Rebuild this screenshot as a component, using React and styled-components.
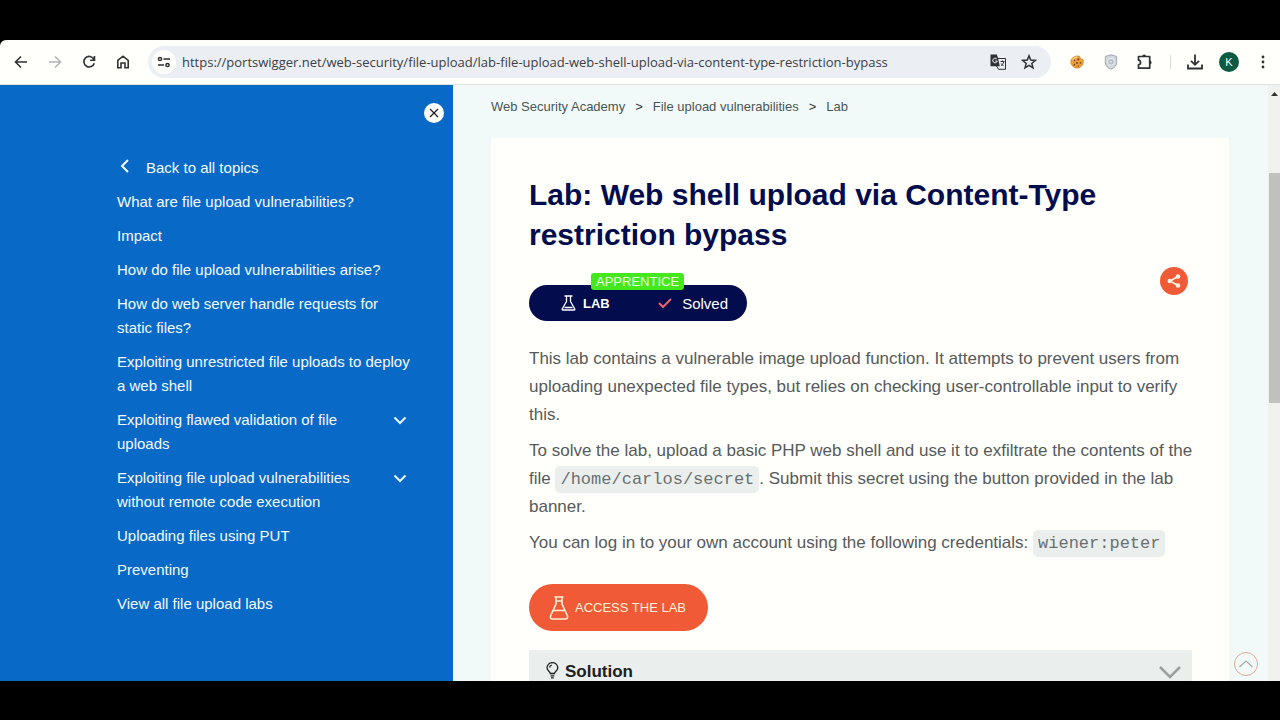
import React, { useState } from 'react';
import styled, { createGlobalStyle } from 'styled-components';

const GlobalStyle = createGlobalStyle`
  * {
    box-sizing: border-box;
  }

  body {
    margin: 0;
    background-color: #000;
    font-family: 'Liberation Sans', Arial, sans-serif;
  }

  h1, h2, p, ul, ol {
    margin: 0;
    padding: 0;
  }

  button {
    padding: 0;
    border: none;
    background: transparent;
    font-family: inherit;
    cursor: pointer;
  }

  svg {
    display: block;
    flex-shrink: 0;
  }
`;

const Screen = styled.div`
  display: flex;
  flex-direction: column;
  height: 100vh;
  padding: 40px 0 39px;
  background-color: #000;
`;

const Toolbar = styled.header`
  display: flex;
  align-items: center;
  flex-shrink: 0;
  height: 45px;
  padding: 0 7px 0 11px;
  background-color: #fffffc;
  border-bottom: 1px solid #dfe3e2;
  border-top-left-radius: 6px;
`;

const NavButtons = styled.nav`
  display: flex;
  gap: 14px;
  margin-right: 15px;
`;

const IconButton = styled.button`
  display: flex;
  align-items: center;
  justify-content: center;
  width: 20px;
  height: 24px;
  color: ${({ $muted }) => ($muted ? '#b4b5b4' : '#2f3133')};
`;

const AddressBar = styled.div`
  display: flex;
  align-items: center;
  flex: 1;
  height: 32px;
  padding: 0 12px 0 4px;
  border-radius: 16px;
  background-color: #ebeef3;
`;

const SiteInfo = styled.button`
  display: flex;
  align-items: center;
  justify-content: center;
  width: 24px;
  height: 24px;
  margin-right: 6px;
  border-radius: 50%;
  background-color: #fffffc;
  color: #2f3133;
`;

const UrlInput = styled.input`
  flex: 1;
  min-width: 0;
  padding: 0;
  border: none;
  outline: none;
  background: transparent;
  color: #3c4043;
  font-family: 'Open Sans', 'Noto Sans', sans-serif;
  font-size: 13px;
`;

const BarActions = styled.div`
  display: flex;
  align-items: center;
  gap: 11px;
`;

const Extensions = styled.div`
  display: flex;
  align-items: center;
  gap: 14px;
  margin-left: 16px;
`;

const Divider = styled.span`
  width: 1px;
  height: 14px;
  margin-left: 1px;
  background-color: #d8dade;
`;

const Avatar = styled.button`
  width: 20px;
  height: 20px;
  border-radius: 50%;
  background-color: #0b5a41;
  color: #fff;
  font-size: 11px;
`;

const Page = styled.div`
  position: relative;
  display: flex;
  flex: 1;
  min-height: 0;
  overflow: hidden;
  background-color: #f1faf8;
`;

const Sidebar = styled.aside`
  display: flex;
  flex-direction: column;
  flex-shrink: 0;
  width: 453px;
  padding: 18px 9px 0 117px;
  background-color: #0969c6;
`;

const CloseButton = styled.button`
  display: flex;
  align-items: center;
  justify-content: center;
  align-self: flex-end;
  width: 20px;
  height: 20px;
  margin-bottom: 33px;
  border-radius: 50%;
  background-color: #fff;
  color: #222;
`;

const TopicList = styled.ul`
  display: flex;
  flex-direction: column;
  gap: 10px;
  width: 298px;
  list-style: none;
`;

const Topic = styled.li`
  display: flex;
  justify-content: space-between;
`;

const TopicLink = styled.a`
  display: flex;
  gap: 12px;
  max-width: ${({ $narrow }) => ($narrow ? '240px' : 'none')};
  color: #f4fbff;
  font-size: 15px;
  line-height: 24px;
  text-decoration: none;

  &:hover {
    text-decoration: underline;
  }
`;

const ExpandButton = styled.button`
  display: flex;
  align-items: center;
  justify-content: center;
  width: 30px;
  height: 24px;
  color: #e6f7ff;
`;

const Main = styled.main`
  flex: 1;
  min-width: 0;
  padding: 12px 39px 0 38px;
`;

const Breadcrumbs = styled.nav`
  display: flex;
  gap: 10px;
  margin-bottom: 21px;
  color: #333;
  font-size: 13px;
  line-height: 20px;

  a {
    color: #4c5555;
    text-decoration: none;
  }
`;

const Card = styled.article`
  padding: 37px 37px 0 38px;
  background-color: #fffffc;
`;

const Title = styled.h1`
  color: #030c4c;
  font-size: 30px;
  line-height: 40px;
`;

const StatusRow = styled.div`
  display: flex;
  align-items: flex-start;
  justify-content: space-between;
  margin: 12px 4px 24px 0;
`;

const StatusPill = styled.div`
  position: relative;
  display: flex;
  align-items: center;
  width: 218px;
  height: 36px;
  margin-top: 18px;
  padding: 0 19px 0 32px;
  border-radius: 18px;
  background-color: #030c4c;
  color: #fff;
  font-size: 15px;
`;

const Level = styled.span`
  position: absolute;
  top: -12px;
  left: 62px;
  padding: 0 5px;
  border-radius: 3px;
  background-color: #45e81c;
  color: #e9ffe0;
  font-size: 13px;
  line-height: 17px;
`;

const LabLabel = styled.strong`
  margin: 0 auto 0 7px;
  font-size: 13px;
`;

const SolvedLabel = styled.span`
  margin-left: 10px;
`;

const ShareButton = styled.button`
  display: flex;
  align-items: center;
  justify-content: center;
  width: 28px;
  height: 28px;
  border-radius: 50%;
  background-color: #f05a36;
  color: #fff2e6;
`;

const Paragraph = styled.p`
  margin: 0 -4px 8px 0;
  color: #565a5a;
  font-size: 17px;
  line-height: 28px;
`;

const Code = styled.code`
  padding: 4px 5px;
  border-radius: 5px;
  background-color: #eaefee;
  color: #6a7070;
  font-family: 'Liberation Mono', monospace;
  font-size: 17px;
  line-height: 20px;
`;

const AccessButton = styled.a`
  display: inline-flex;
  align-items: center;
  gap: 6px;
  height: 47px;
  margin: 19px 0;
  padding: 0 22px 0 20px;
  border-radius: 24px;
  background-color: #f05a36;
  color: #fff2d8;
  font-size: 13px;
  text-decoration: none;
`;

const SolutionToggle = styled.button`
  display: flex;
  align-items: center;
  width: 100%;
  height: 44px;
  padding: 0 11px 0 17px;
  background-color: #eaefee;
  color: #9a9f9f;
`;

const SolutionTitle = styled.h2`
  margin: 0 auto 0 6px;
  color: #1c2020;
  font-size: 17px;
`;

const ToTopButton = styled.button`
  position: absolute;
  right: 22px;
  bottom: 5px;
  display: flex;
  align-items: center;
  justify-content: center;
  width: 24px;
  height: 24px;
  border: 1px solid #e2a894;
  border-radius: 50%;
  color: #a9aaa8;
`;

const ScrollTrack = styled.div`
  display: flex;
  flex-direction: column;
  align-items: center;
  flex-shrink: 0;
  width: 12px;
  padding-top: 7px;
  background-color: #f1f1f0;
  color: #333;
`;

const ScrollThumb = styled.div`
  width: 11px;
  height: 39%;
  margin: 77px 0 auto 1px;
  background-color: #c0c0be;
`;

const Icon = ({ size = 16, width = size, height = size, box = 16, stroke = 1.6, children }) => (
  <svg
    width={width}
    height={height}
    viewBox={typeof box === 'number' ? `0 0 ${box} ${box}` : box}
    fill="none"
    stroke="currentColor"
    strokeWidth={stroke}
    aria-hidden="true"
  >
    {children}
  </svg>
);

const topics = [
  { label: 'What are file upload vulnerabilities?' },
  { label: 'Impact' },
  { label: 'How do file upload vulnerabilities arise?' },
  { label: 'How do web server handle requests for static files?' },
  { label: 'Exploiting unrestricted file uploads to deploy a web shell' },
  { label: 'Exploiting flawed validation of file uploads', expandable: true },
  { label: 'Exploiting file upload vulnerabilities without remote code execution', expandable: true },
  { label: 'Uploading files using PUT' },
  { label: 'Preventing' },
  { label: 'View all file upload labs' },
];

const BrowserToolbar = () => {
  const [url, setUrl] = useState(
    'https://portswigger.net/web-security/file-upload/lab-file-upload-web-shell-upload-via-content-type-restriction-bypass'
  );

  return (
    <Toolbar>
      <NavButtons aria-label="Browser">
        <IconButton aria-label="Back">
          <Icon><path d="M14 8H3M8 2.500 2.500 8 8 13.500" /></Icon>
        </IconButton>
        <IconButton aria-label="Forward" $muted>
          <Icon><path d="M2 8h11M8 2.500 13.500 8 8 13.500" /></Icon>
        </IconButton>
        <IconButton aria-label="Reload">
          <Icon><path d="M12.800 5A5.300 5.300 0 1 0 13.300 9.200M13.500 2v4.300H9.200" /></Icon>
        </IconButton>
        <IconButton aria-label="Home">
          <Icon><path d="M2.800 6.300 8 2.200l5.200 4.100v7.500H10V9H6v4.800H2.800z" /></Icon>
        </IconButton>
      </NavButtons>
      <AddressBar>
        <SiteInfo aria-label="Site information">
          <Icon size={14} box={14} stroke={1.5}>
            <circle cx="3" cy="4" r="1.600" />
            <path d="M6.500 4H13M1 10h6" />
            <circle cx="10.500" cy="10" r="1.600" />
          </Icon>
        </SiteInfo>
        <UrlInput aria-label="Address" value={url} onChange={(e) => setUrl(e.target.value)} />
        <BarActions>
          <IconButton aria-label="Translate">
            <Icon box={16} stroke={1}>
              <path d="M6.500 4.500h9v10.800H8.500L6.500 12" />
              <path d="M.5.500h6.300l1 2.700 2 9H.5z" fill="currentColor" stroke="none" />
              <path d="M6.800 5A2.300 2.300 0 1 0 7.300 7H5.200" stroke="#ebeef3" />
              <path d="M10.500 7.500h4M12.500 6.500v1M13.700 7.800c-.5 2-1.500 3-2.700 4M11 9.500l2.500 2.500" />
            </Icon>
          </IconButton>
          <IconButton aria-label="Bookmark">
            <Icon stroke={1.500}>
              <path d="m8 1.800 1.700 4.300 4.700.3-3.600 3 1.200 4.500L8 11.400l-4 2.500 1.200-4.500-3.600-3 4.700-.3z" />
            </Icon>
          </IconButton>
        </BarActions>
      </AddressBar>
      <Extensions>
        <IconButton aria-label="Cookie editor">
          <Icon size={14} stroke={1}>
            <path d="M8 1 11 1.500 12 4l3 1.500.3 3L14 12l-3 2.600-4 .4-3.800-2L1 9.500 1.200 5.500 4 2.300z" fill="#eba13a" stroke="#cf7c20" strokeWidth=".8" strokeLinejoin="round" />
            <path d="M3 6.500A5.500 5.500 0 0 1 8 2.500" stroke="#f8ca74" strokeWidth="2" />
            <g fill="#7c4316" stroke="none">
              <circle cx="5" cy="6" r="1" />
              <circle cx="9.500" cy="5" r="1.200" />
              <circle cx="8" cy="9" r="1.100" />
              <circle cx="12" cy="9" r="1" />
              <circle cx="5" cy="11" r="1" />
              <circle cx="9.500" cy="12.500" r=".9" />
            </g>
          </Icon>
        </IconButton>
        <IconButton aria-label="Shield">
          <Icon stroke={1}>
            <path d="M8 .8 2.300 2.500v5.700c0 3.500 2.300 5.800 5.700 7 3.400-1.200 5.700-3.500 5.700-7V2.500z" fill="#d3d7dc" stroke="#a2a8b0" />
            <circle cx="8" cy="7.800" r="3.400" fill="#b4bbc4" stroke="#edf0f2" />
            <circle cx="8" cy="7.800" r="1.300" fill="#d8dce1" stroke="none" />
          </Icon>
        </IconButton>
        <IconButton aria-label="Extensions">
          <Icon stroke={1.700}>
            <path d="M1.500 2.500h11.200v11.700H1.500v-3.400c2.700-.4 2.700-4.200 0-4.600z" strokeLinejoin="round" />
            <path d="M5.300 2.500a1.900 1.900 0 0 1 3.800 0M12.700 6.500a1.900 1.900 0 0 1 0 3.800" fill="currentColor" stroke="none" />
          </Icon>
        </IconButton>
        <Divider />
        <IconButton aria-label="Downloads">
          <Icon stroke={1.800}>
            <path d="M8 .5v10M4 6.800l4 4 4-4M1 10.500v4h14v-4" />
          </Icon>
        </IconButton>
        <Avatar aria-label="Profile">K</Avatar>
        <IconButton aria-label="Menu">
          <Icon>
            <g fill="currentColor" stroke="none">
              <circle cx="8" cy="3" r="1.400" />
              <circle cx="8" cy="8" r="1.400" />
              <circle cx="8" cy="13" r="1.400" />
            </g>
          </Icon>
        </IconButton>
      </Extensions>
    </Toolbar>
  );
};

const TopicSidebar = () => (
  <Sidebar>
    <CloseButton aria-label="Close menu">
      <Icon size={10} box={10} stroke={1.300}><path d="m1 1 8 8M9 1 1 9" /></Icon>
    </CloseButton>
    <TopicList>
      <Topic>
        <TopicLink href="#topics">
          <Icon width={17} height={20} box="0 0 17 20" stroke={2}><path d="m11 4-6 6 6 6" /></Icon>
          Back to all topics
        </TopicLink>
      </Topic>
      {topics.map(({ label, expandable }) => (
        <Topic key={label}>
          <TopicLink href="#topic" $narrow={expandable}>{label}</TopicLink>
          {expandable && (
            <ExpandButton aria-label={`Expand ${label}`}>
              <Icon width={14} height={9} box="0 0 14 9" stroke={2}><path d="m1.500 1.500 5.500 5.500 5.500-5.500" /></Icon>
            </ExpandButton>
          )}
        </Topic>
      ))}
    </TopicList>
  </Sidebar>
);

const App = () => (
  <>
    <GlobalStyle />
    <Screen>
      <BrowserToolbar />
      <Page>
        <TopicSidebar />
        <Main>
          <Breadcrumbs aria-label="Breadcrumb">
            <a href="#academy">Web Security Academy</a>
            <span>&gt;</span>
            <a href="#file-upload">File upload vulnerabilities</a>
            <span>&gt;</span>
            <a href="#lab">Lab</a>
          </Breadcrumbs>
          <Card>
            <Title>Lab: Web shell upload via Content-Type restriction bypass</Title>
            <StatusRow>
              <StatusPill>
                <Level>APPRENTICE</Level>
                <Icon width={15} height={16} box="0 0 15 16" stroke={1.300}>
                  <path d="M3.500 1h8M5.500 1v5.500L1.200 14q-.3 1 .8 1h11q1.100 0 .8-1L9.500 6.500V1M3.500 12.500h8" strokeLinejoin="round" />
                </Icon>
                <LabLabel>LAB</LabLabel>
                <Icon width={14} height={12} box="0 0 14 12" stroke={2}>
                  <path d="m1 6 4 4L13 2" stroke="#f0626a" />
                </Icon>
                <SolvedLabel>Solved</SolvedLabel>
              </StatusPill>
              <ShareButton aria-label="Share">
                <Icon size={14} box={14} stroke={1.600}>
                  <path d="M11 2.500 3 7l8 4.500" />
                  <g fill="currentColor" stroke="none">
                    <circle cx="11" cy="2.500" r="2.300" />
                    <circle cx="2.800" cy="7" r="2.300" />
                    <circle cx="11" cy="11.500" r="2.300" />
                  </g>
                </Icon>
              </ShareButton>
            </StatusRow>
            <Paragraph>
              This lab contains a vulnerable image upload function. It attempts to prevent users from
              uploading unexpected file types, but relies on checking user-controllable input to verify this.
            </Paragraph>
            <Paragraph>
              To solve the lab, upload a basic PHP web shell and use it to exfiltrate the contents of the
              file <Code>/home/carlos/secret</Code>. Submit this secret using the button provided in the lab banner.
            </Paragraph>
            <Paragraph>
              You can log in to your own account using the following credentials: <Code>wiener:peter</Code>
            </Paragraph>
            <AccessButton href="#launch">
              <Icon width={20} height={24} box="0 0 20 24" stroke={1.600}>
                <path d="M5.500 1h9M7 1v7L1.500 20Q1 23 3.500 23h13q2.500 0 2-3L13 8V1M7 5h6M4.500 14.500h11" strokeLinejoin="round" />
              </Icon>
              ACCESS THE LAB
            </AccessButton>
            <SolutionToggle>
              <Icon width={13} height={20} box="0 0 13 20" stroke={1.300}>
                <path d="M4.300 11.500C4.300 9.500 1 8.800 1 5.800a5.400 5.200 0 0 1 10.800 0c0 3-3.300 3.700-3.300 5.700zM4.500 13.800h3.800M5 15.800h2.800M3.500 5.500a3 3 0 0 1 2.300-2.300" stroke="#1c2020" />
              </Icon>
              <SolutionTitle>Solution</SolutionTitle>
              <Icon width={22} height={13} box="0 0 22 13" stroke={2.500}><path d="m1 1 10 10L21 1" /></Icon>
            </SolutionToggle>
          </Card>
        </Main>
        <ScrollTrack>
          <Icon width={7} height={4} box="0 0 7 4"><path d="M0 4 3.500 0 7 4z" fill="currentColor" stroke="none" /></Icon>
          <ScrollThumb />
        </ScrollTrack>
        <ToTopButton aria-label="Back to top">
          <Icon width={14} height={8} box="0 0 14 8" stroke={1.200}><path d="m.5 7 6.500-6 6.500 6" /></Icon>
        </ToTopButton>
      </Page>
    </Screen>
  </>
);

export default App;
